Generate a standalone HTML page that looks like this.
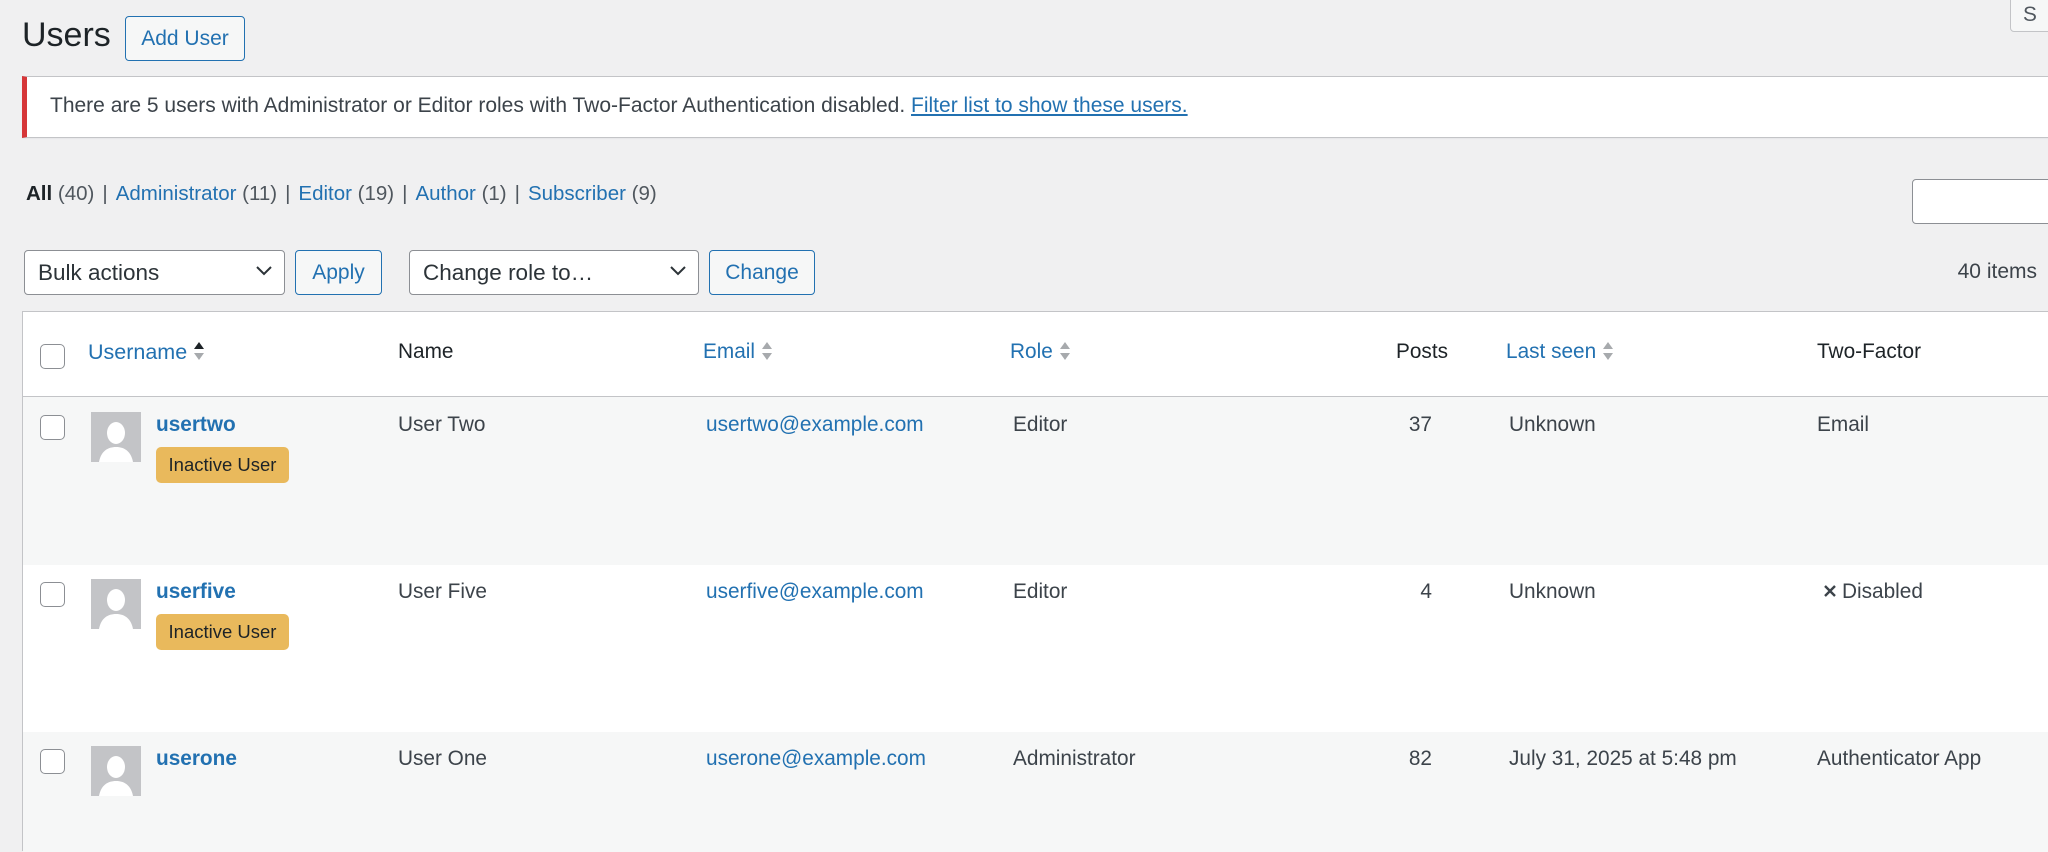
<!DOCTYPE html>
<html><head><meta charset="utf-8"><style>
*{box-sizing:border-box;margin:0;padding:0}
body{width:2048px;height:844px;overflow:hidden;background:#f0f0f1;font-family:"Liberation Sans",sans-serif;color:#3c434a;font-size:20.8px;position:relative}
.a{position:absolute;white-space:nowrap}
a,.lnk{color:#2271b1;text-decoration:none}
.btn{position:absolute;border:1.5px solid #2271b1;color:#2271b1;background:#f6f7f7;border-radius:4px;display:flex;align-items:center;justify-content:center;font-size:21px}
.sel{position:absolute;border:1.5px solid #8c8f94;background:#fff;border-radius:4px;color:#2c3338;font-size:22.5px;padding-left:13px;display:flex;align-items:center}
.sel svg{position:absolute;right:12px;top:15px}
.cb{position:absolute;width:25px;height:25px;border:1.5px solid #8c8f94;border-radius:5px;background:#fff}
.av{position:absolute;width:50px;height:50px;background:#c3c4c7;overflow:hidden}
.badge{position:absolute;background:#e9b95c;border-radius:5px;color:#1d2327;font-size:18.5px;display:flex;align-items:center;justify-content:center;width:133px;height:36px}
.sort{display:inline-block;vertical-align:middle;margin-left:6px;position:relative;top:-2px}
.sep{margin:0 8px}
</style></head><body>
<div class="a" style="left:22px;top:16px;font-size:34px;color:#1d2327">Users</div>
<div class="btn" style="left:125px;top:16px;width:120px;height:45px">Add User</div>
<div class="a" style="left:2010px;top:-6px;width:60px;height:38px;border:1.5px solid #c3c4c7;background:#f6f7f7;border-radius:4px;padding:8px 0 0 12px;color:#50575e">S</div>

<div class="a" style="left:22px;top:76px;width:2030px;height:62px;background:#fff;border:1px solid #c3c4c7;border-left:5px solid #d63638;box-shadow:0 1px 1px rgba(0,0,0,.04)"></div>
<div class="a" style="left:50px;top:94px;font-size:21px;color:#3c434a">There are 5 users with Administrator or Editor roles with Two-Factor Authentication disabled. <span class="lnk" style="text-decoration:underline">Filter list to show these users.</span></div>

<div class="a" style="left:26px;top:182px;font-size:20.5px;color:#50575e"><b style="color:#1d2327;font-weight:600">All</b> (40)<span class="sep">|</span><span class="lnk">Administrator</span> (11)<span class="sep">|</span><span class="lnk">Editor</span> (19)<span class="sep">|</span><span class="lnk">Author</span> (1)<span class="sep">|</span><span class="lnk">Subscriber</span> (9)</div>
<div class="a" style="left:1912px;top:179px;width:160px;height:45px;border:1.5px solid #8c8f94;border-radius:4px;background:#fff"></div>

<div class="sel" style="left:24px;top:250px;width:261px;height:45px">Bulk actions<svg width="16" height="10" viewBox="0 0 16 10"><path d="M1 1l7 7 7-7" fill="none" stroke="#2c3338" stroke-width="2"/></svg></div>
<div class="btn" style="left:295px;top:250px;width:87px;height:45px">Apply</div>
<div class="sel" style="left:409px;top:250px;width:290px;height:45px">Change role to…<svg width="16" height="10" viewBox="0 0 16 10"><path d="M1 1l7 7 7-7" fill="none" stroke="#2c3338" stroke-width="2"/></svg></div>
<div class="btn" style="left:709px;top:250px;width:106px;height:45px">Change</div>
<div class="a" style="right:11px;top:260px;color:#3c434a;font-size:21px">40 items</div>

<div class="a" style="left:22px;top:311px;width:2040px;height:540px;border:1px solid #c3c4c7;background:#fff"></div>
<div class="a" style="left:23px;top:396px;width:2030px;height:1px;background:#c3c4c7"></div>
<div class="a" style="left:23px;top:397px;width:2030px;height:168px;background:#f6f7f7"></div>
<div class="a" style="left:23px;top:732px;width:2030px;height:120px;background:#f6f7f7"></div>

<div class="cb" style="left:40px;top:344px"></div>
<div class="a lnk" style="left:88px;top:340px;font-size:21.5px">Username<svg class="sort" width="12" height="20" viewBox="0 0 12 20"><path d="M6 1l5 7H1z" fill="#1d2327"/><path d="M6 19l5-7H1z" fill="#a7aaad"/></svg></div>
<div class="a" style="left:398px;top:340px;color:#1d2327">Name</div>
<div class="a lnk" style="left:703px;top:340px">Email<svg class="sort" width="12" height="20" viewBox="0 0 12 20"><path d="M6 1l5 7H1z" fill="#a7aaad"/><path d="M6 19l5-7H1z" fill="#a7aaad"/></svg></div>
<div class="a lnk" style="left:1010px;top:340px">Role<svg class="sort" width="12" height="20" viewBox="0 0 12 20"><path d="M6 1l5 7H1z" fill="#a7aaad"/><path d="M6 19l5-7H1z" fill="#a7aaad"/></svg></div>
<div class="a" style="right:600px;top:340px;color:#1d2327">Posts</div>
<div class="a lnk" style="left:1506px;top:340px">Last seen<svg class="sort" width="12" height="20" viewBox="0 0 12 20"><path d="M6 1l5 7H1z" fill="#a7aaad"/><path d="M6 19l5-7H1z" fill="#a7aaad"/></svg></div>
<div class="a" style="left:1817px;top:340px;color:#1d2327">Two-Factor</div>

<!-- row 1 -->
<div class="cb" style="left:40px;top:415px"></div>
<div class="av" style="left:91px;top:412px"><svg width="50" height="50" viewBox="0 0 50 50"><ellipse cx="25" cy="21" rx="9" ry="11" fill="#fff"/><path d="M8 50c2-11 9-15 17-15s15 4 17 15z" fill="#fff"/></svg></div>
<div class="a lnk" style="left:156px;top:413px;font-weight:bold">usertwo</div>
<div class="badge" style="left:156px;top:447px">Inactive User</div>
<div class="a" style="left:398px;top:413px">User Two</div>
<div class="a lnk" style="left:706px;top:413px">usertwo@example.com</div>
<div class="a" style="left:1013px;top:413px">Editor</div>
<div class="a" style="right:616px;top:413px">37</div>
<div class="a" style="left:1509px;top:413px">Unknown</div>
<div class="a" style="left:1817px;top:413px">Email</div>

<!-- row 2 -->
<div class="cb" style="left:40px;top:582px"></div>
<div class="av" style="left:91px;top:579px"><svg width="50" height="50" viewBox="0 0 50 50"><ellipse cx="25" cy="21" rx="9" ry="11" fill="#fff"/><path d="M8 50c2-11 9-15 17-15s15 4 17 15z" fill="#fff"/></svg></div>
<div class="a lnk" style="left:156px;top:580px;font-weight:bold">userfive</div>
<div class="badge" style="left:156px;top:614px">Inactive User</div>
<div class="a" style="left:398px;top:580px">User Five</div>
<div class="a lnk" style="left:706px;top:580px">userfive@example.com</div>
<div class="a" style="left:1013px;top:580px">Editor</div>
<div class="a" style="right:616px;top:580px">4</div>
<div class="a" style="left:1509px;top:580px">Unknown</div>
<div class="a" style="left:1823px;top:580px"><svg width="14" height="14" viewBox="0 0 14 14" style="margin-right:5px"><path d="M2 2l10 10M12 2L2 12" stroke="#3c434a" stroke-width="2.4"/></svg>Disabled</div>

<!-- row 3 -->
<div class="cb" style="left:40px;top:749px"></div>
<div class="av" style="left:91px;top:746px"><svg width="50" height="50" viewBox="0 0 50 50"><ellipse cx="25" cy="21" rx="9" ry="11" fill="#fff"/><path d="M8 50c2-11 9-15 17-15s15 4 17 15z" fill="#fff"/></svg></div>
<div class="a lnk" style="left:156px;top:747px;font-weight:bold">userone</div>
<div class="a" style="left:398px;top:747px">User One</div>
<div class="a lnk" style="left:706px;top:747px">userone@example.com</div>
<div class="a" style="left:1013px;top:747px">Administrator</div>
<div class="a" style="right:616px;top:747px">82</div>
<div class="a" style="left:1509px;top:747px">July 31, 2025 at 5:48 pm</div>
<div class="a" style="left:1817px;top:747px">Authenticator App</div>
</body></html>
